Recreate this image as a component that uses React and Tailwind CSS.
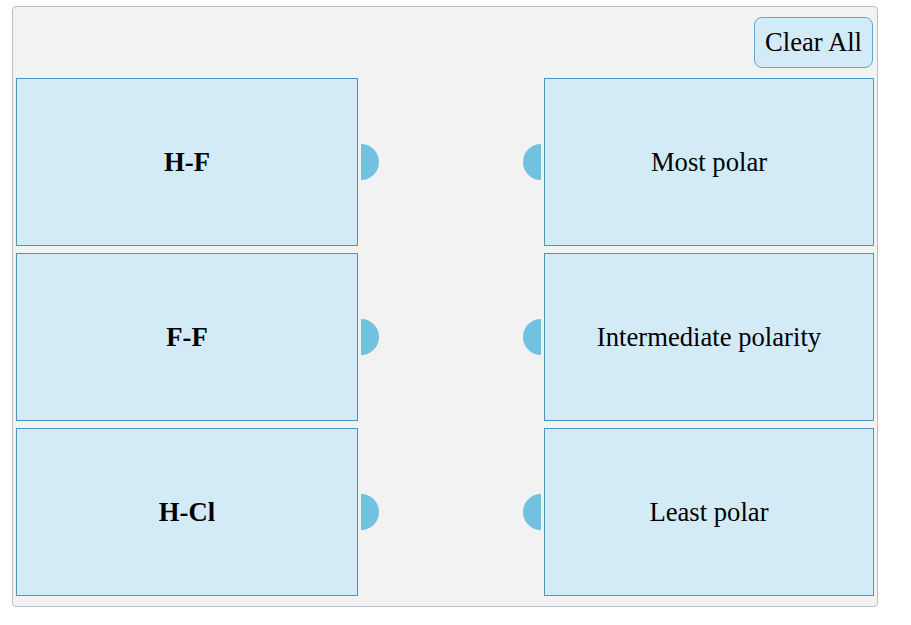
const pairs = [
  { left: 'H-F', right: 'Most polar' },
  { left: 'F-F', right: 'Intermediate polarity' },
  { left: 'H-Cl', right: 'Least polar' },
];

function Knob({ side }) {
  // half disc that sticks out of a card; flat edge faces the card
  return (
    <div
      className={`w-[18px] h-[36px] bg-[#72c1e0] ${
        side === 'left' ? 'rounded-r-full' : 'rounded-l-full'
      }`}
    />
  );
}

export default function App() {
  return (
    <div className="w-[911px] h-[625px] bg-white font-['Liberation_Serif',serif] text-black">
      <div className="ml-[12px] mt-[6px] w-[866px] h-[601px] rounded border border-[#b5c0d4] bg-[#f2f2f2] pt-[10px] pl-[3px]">
        <div className="flex justify-end pr-[4px]">
          <button className="h-[51px] w-[119px] rounded-lg border border-[#6aa4c8] bg-[#d3eaf7] text-[26.67px] leading-none">
            Clear All
          </button>
        </div>
        <div className="mt-[10px] flex flex-col gap-[7px]">
          {pairs.map((p) => (
            <div key={p.left} className="flex items-center">
              <div className="flex h-[168px] w-[342px] items-center justify-center border border-[#4a96be] bg-[#d3eaf7] text-[26.67px] font-bold">
                {p.left}
              </div>
              <div className="ml-[3px]">
                <Knob side="left" />
              </div>
              <div className="w-[144px]" />
              <div className="mr-[3px]">
                <Knob side="right" />
              </div>
              <div className="flex h-[168px] w-[330px] items-center justify-center border border-[#4a96be] bg-[#d3eaf7] text-[26.67px]">
                {p.right}
              </div>
            </div>
          ))}
        </div>
      </div>
    </div>
  );
}
